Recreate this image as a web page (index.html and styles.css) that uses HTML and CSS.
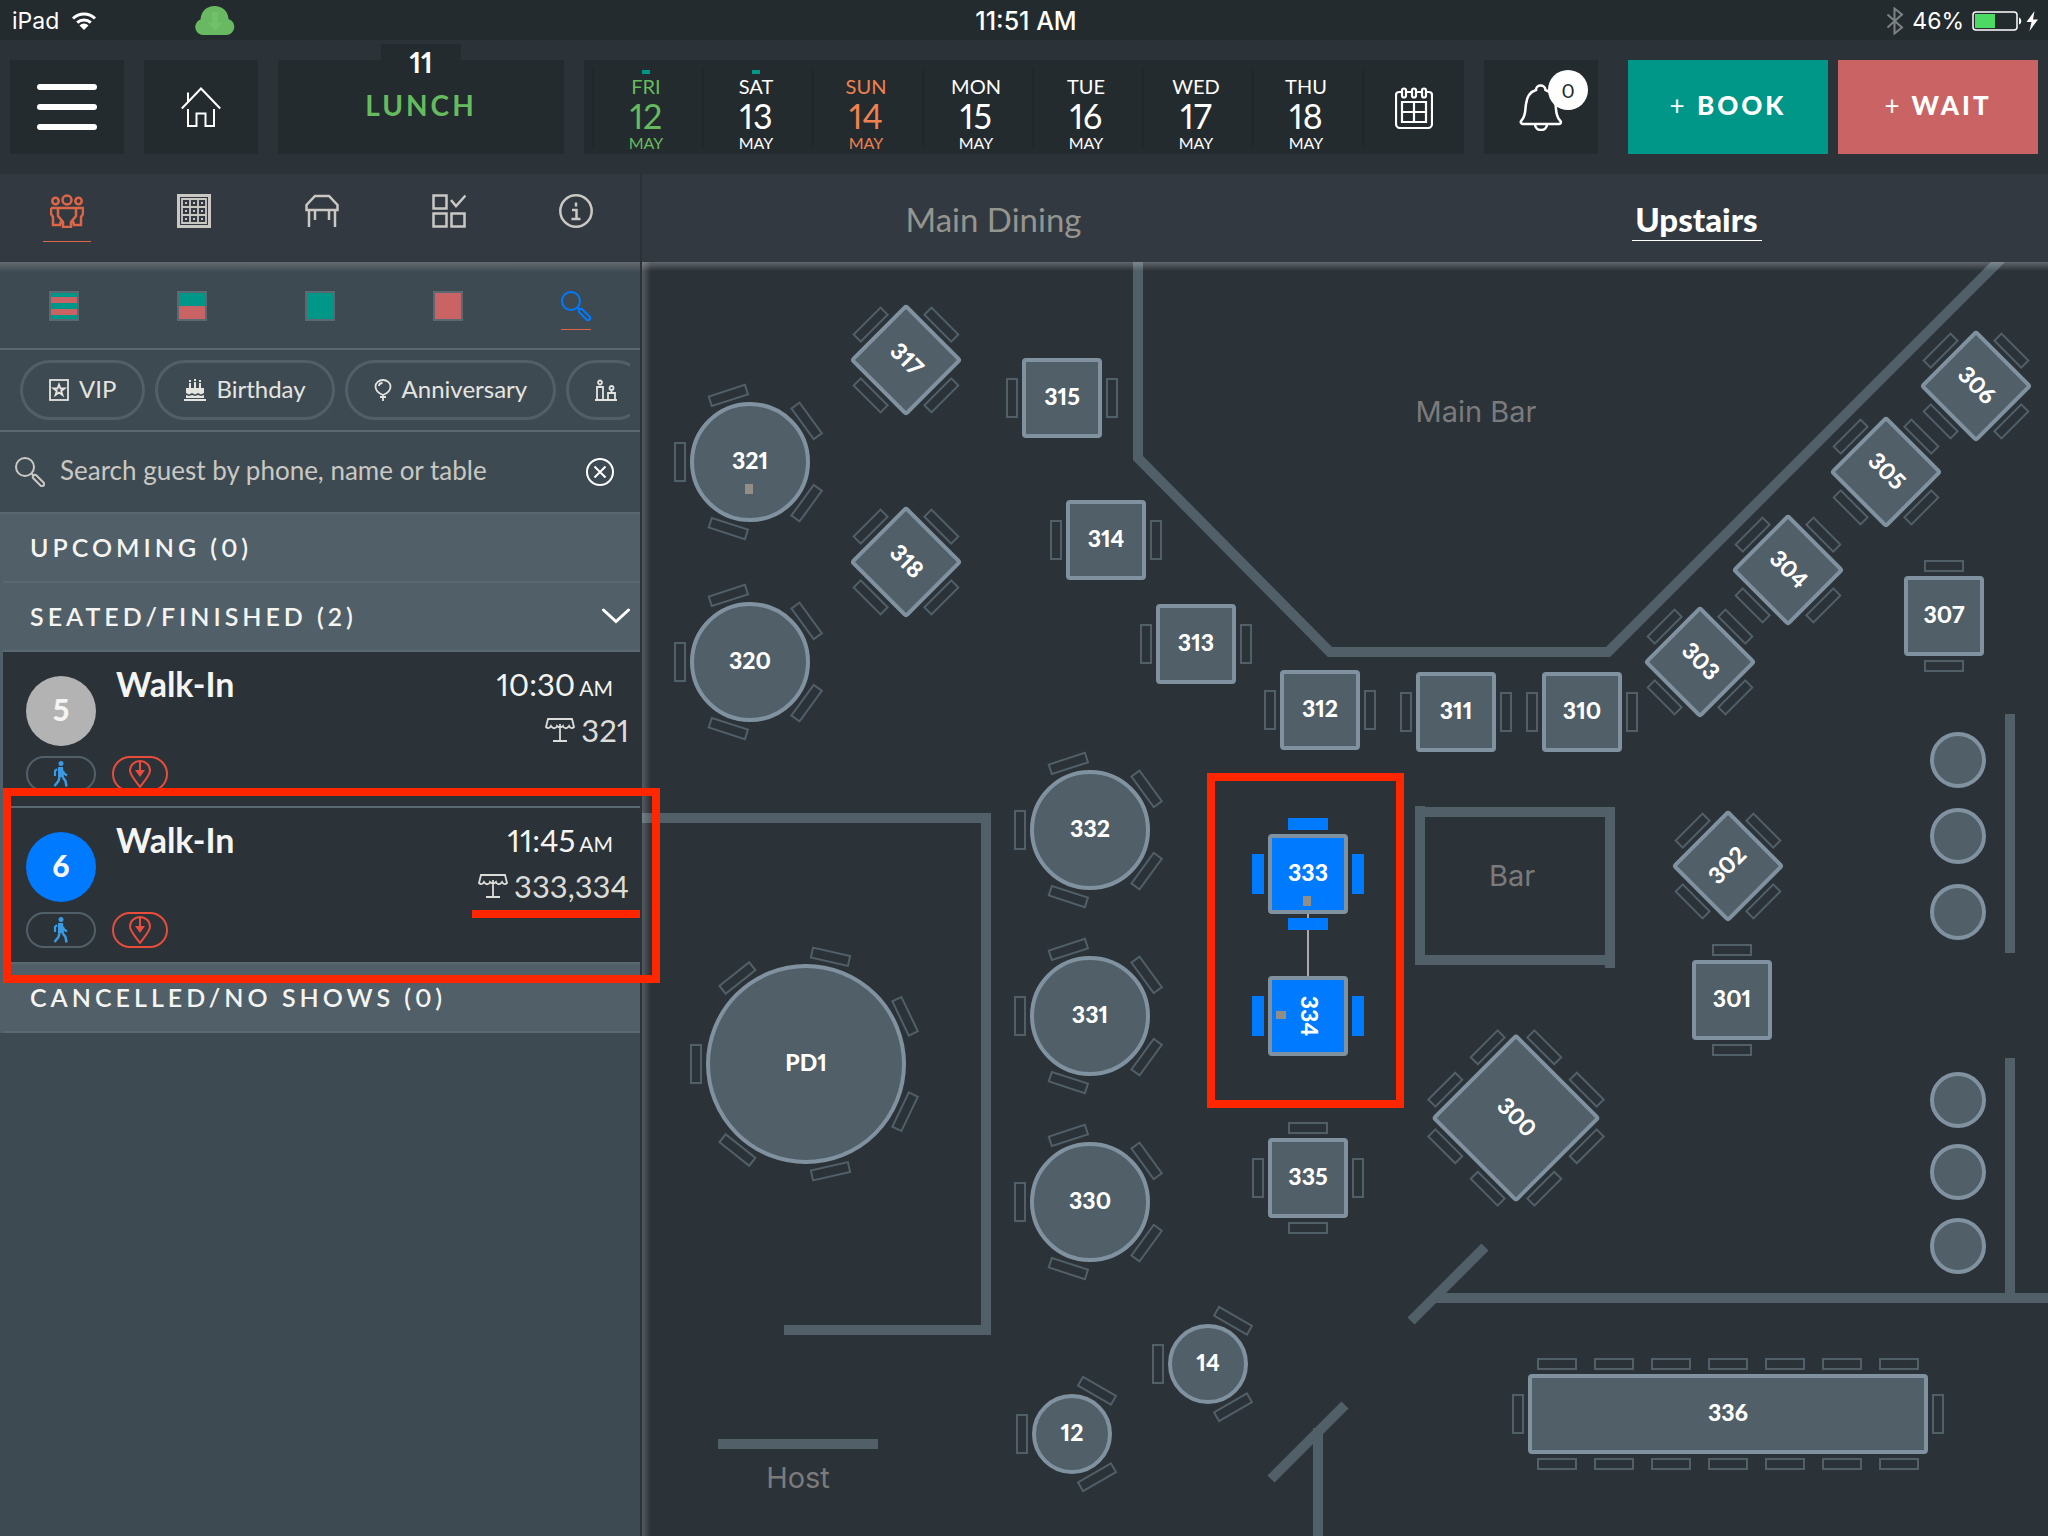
FILE: index.html
```
<!DOCTYPE html>
<html lang="en">
  <head>
    <meta charset="UTF-8" />
    <meta name="viewport" content="width=device-width, initial-scale=1.0" />
    <title>Floor Plan</title>
    <link rel="stylesheet" href="styles.css">
  </head>
  <body>
    <div class="status-bar">
      <div class="status-left">
        <span>iPad</span>
        <svg class="wifi" width="26" height="20" viewBox="0 0 26 20">
          <path d="M2 7.500a16 16 0 0 1 22 0M6.200 11.700a10 10 0 0 1 13.600 0" fill="none" stroke="#fff" stroke-width="3"/>
          <path d="M13 19l-4.500-4.600a6.500 6.500 0 0 1 9 0z" fill="#fff"/>
        </svg>
        <svg class="cloud" width="40" height="30" viewBox="0 0 40 30">
          <path d="M8 29a8 8 0 0 1-2.500-15.500C6 5 12 0 19.500 0S33 5 33.500 13A8.200 8.200 0 0 1 32 29z" fill="#69b963"/>
          <path d="M17 6h6v11h4l-7 8-7-8h4z" fill="#73c06b"/>
        </svg>
      </div>
      <span class="clock">11:51 AM</span>
      <div class="status-right">
        <svg width="18" height="28" viewBox="0 0 18 28">
          <path d="M1.500 7.500L16 20.500l-7.500 6V1.500l7.500 6L1.500 20.500" fill="none" stroke="#7d8284" stroke-width="2"/>
        </svg>
        <span>46%</span>
        <svg width="68" height="22" viewBox="0 0 68 22">
          <rect x="1" y="2" width="44" height="18" rx="3" fill="none" stroke="#fff" stroke-width="1.500"/>
          <rect x="3" y="4" width="20" height="14" fill="#4cd964"/>
          <path d="M47 7.500c3 1 3 6 0 7z" fill="#fff"/>
          <path d="M62.500 1L54.500 12h5l-2 9 8.500-11.500h-5z" fill="#fff"/>
        </svg>
      </div>
    </div>

    <header class="toolbar">
      <button class="tile" aria-label="Menu">
        <svg width="60" height="46" viewBox="0 0 60 46" fill="#fff">
          <rect width="60" height="6" rx="3"/>
          <rect y="20" width="60" height="6" rx="3"/>
          <rect y="40" width="60" height="6" rx="3"/>
        </svg>
      </button>
      <button class="tile" aria-label="Home">
        <svg width="40" height="40" viewBox="0 0 40 40" fill="none" stroke="#fff" stroke-width="2">
          <path d="M0.800 21.500L20 1.500l19.200 20M7 14.500V5.500M7 22v17h8.500V26.500h9V39H33V22"/>
        </svg>
      </button>
      <button class="tile shift">
        <span class="shift-count">11</span>
        LUNCH
      </button>
      <nav class="dates">
        <a href="#" class="date today has-mark"><span>FRI</span><b>12</b><small>MAY</small></a>
        <a href="#" class="date has-mark"><span>SAT</span><b>13</b><small>MAY</small></a>
        <a href="#" class="date holiday"><span>SUN</span><b>14</b><small>MAY</small></a>
        <a href="#" class="date"><span>MON</span><b>15</b><small>MAY</small></a>
        <a href="#" class="date"><span>TUE</span><b>16</b><small>MAY</small></a>
        <a href="#" class="date"><span>WED</span><b>17</b><small>MAY</small></a>
        <a href="#" class="date"><span>THU</span><b>18</b><small>MAY</small></a>
        <button class="calendar" aria-label="Calendar">
          <svg width="38" height="42" viewBox="0 0 38 42" fill="none" stroke="#fff" stroke-width="2.200">
            <path d="M6 5H4a3 3 0 0 0-3 3v29a4 4 0 0 0 4 4h28a4 4 0 0 0 4-4V8a3 3 0 0 0-3-3h-2M12 5h4M22 5h4"/>
            <rect x="7" y="1.500" width="4" height="9" rx="2"/>
            <rect x="17" y="1.500" width="4" height="9" rx="2"/>
            <rect x="27" y="1.500" width="4" height="9" rx="2"/>
            <path d="M7 15h24v20H7zM7 25h24M19 15v20"/>
          </svg>
        </button>
      </nav>
      <button class="tile bell" aria-label="Notifications">
        <svg width="44" height="48" viewBox="0 0 44 48" fill="none" stroke="#fff" stroke-width="2.500">
          <path d="M4 41c-2 0-3-2-1.500-3.500C7 33 6 27 7 21 8 12 12 8.500 17 7c0-6 9-6 9.500 0 5 1.500 9 6 10 14 .800 6 0 12 4.500 16.500C42.500 39 42 41 40 41z"/>
          <path d="M16 41c0 8 12 8 12 0"/>
        </svg>
        <span class="badge">0</span>
      </button>
      <div class="actions">
        <button class="book"><span>+</span> BOOK</button>
        <button class="wait"><span>+</span> WAIT</button>
      </div>
    </header>

    <main>
      <section class="sidebar">
        <nav class="views">
          <button class="active" aria-label="Guests">
            <svg width="34" height="34" viewBox="0 0 34 34" fill="none" stroke="#dd6647" stroke-width="2.500">
              <circle cx="17" cy="6" r="4.500"/><circle cx="5.500" cy="7" r="3.200"/><circle cx="28.500" cy="7" r="3.200"/>
              <path d="M1 14h32v6l-2 3v8h-7l-1-4M11 27l-1 4H3v-8l-2-3v-6M8 14v8l5 6v5h8v-5l5-6v-8"/>
            </svg>
          </button>
          <button aria-label="Grid">
            <svg width="34" height="34" viewBox="0 0 34 34" fill="none" stroke="#c9c8c3" stroke-width="2">
              <rect x="1.500" y="1.500" width="31" height="31" stroke-width="3"/>
              <path d="M5 5h24v24H5zM13 5v24M21 5v24M5 13h24M5 21h24" stroke-width="1.800"/>
              <path d="M8 9h2M16 9h2M24 9h2M8 17h2M16 17h2M24 17h2M8 25h2M16 25h2M24 25h2"/>
            </svg>
          </button>
          <button aria-label="Tables">
            <svg width="34" height="34" viewBox="0 0 34 34" fill="none" stroke="#c9c8c3" stroke-width="2.500">
              <path d="M10 2h14l8.500 9v5h-31v-5zM4 16v17M30 16v17M10 16v10M24 16v10"/>
            </svg>
          </button>
          <button aria-label="Servers">
            <svg width="34" height="34" viewBox="0 0 34 34" fill="none" stroke="#c9c8c3" stroke-width="2.500">
              <path d="M1.500 1.500h13v13h-13zM1.500 19.500h13v13h-13zM19.500 19.500h13v13h-13zM19 6l5 6 9.500-10.500"/>
            </svg>
          </button>
          <button aria-label="Info">
            <svg width="34" height="34" viewBox="0 0 34 34" fill="none" stroke="#c9c8c3" stroke-width="2.500">
              <circle cx="17" cy="17" r="15.700"/>
              <path d="M17 8.500v4M13 16h4.500v8.500M12.500 25h9" stroke-width="2.500"/>
            </svg>
          </button>
        </nav>

        <nav class="filters">
          <button aria-label="All"><span class="swatch stripes"></span></button>
          <button aria-label="Booked and waiting"><span class="swatch halves"></span></button>
          <button aria-label="Booked"><span class="swatch booked"></span></button>
          <button aria-label="Waiting"><span class="swatch waiting"></span></button>
          <button class="active" aria-label="Search">
            <svg width="30" height="30" viewBox="0 0 30 30" fill="none" stroke="#007aff" stroke-width="2">
              <circle cx="10" cy="10" r="9"/>
              <path d="M16.500 16.500l2.500 2.500M18.500 18.500c1-1 2-1 3 0l7 7c2 2-1 5-3 3l-7-7c-1-1-1-2 0-3z"/>
            </svg>
          </button>
        </nav>

        <div class="chips">
          <button class="chip">
            <svg width="20" height="22" viewBox="0 0 20 22" fill="none" stroke="#e4e4e0" stroke-width="1.800">
              <rect x="1" y="1" width="18" height="20"/>
              <path d="M10 5.500l1.500 4h4l-3.300 2.500 1.300 4-3.500-2.400L6.500 16l1.300-4-3.300-2.500h4z"/>
            </svg>
            <span>VIP</span>
          </button>
          <button class="chip">
            <svg width="22" height="22" viewBox="0 0 22 22" fill="#e4e4e0">
              <path d="M2 9h18v5l-3 1.500-3-1.500-3 1.500-3-1.500-3 1.500L2 14zM2 16l3 1 3-1 3 1 3-1 3 1 3-1v3H2zM0 20h22v2H0zM5 4h2v5H5zM10 3h2v6h-2zM15 4h2v5h-2zM5 1h2v2H5zM10 0h2v2h-2zM15 1h2v2h-2z"/>
            </svg>
            <span>Birthday</span>
          </button>
          <button class="chip">
            <svg width="18" height="22" viewBox="0 0 18 22" fill="none" stroke="#e4e4e0" stroke-width="1.800">
              <path d="M9 16C4 14 1.500 11 1.500 7.500 1.500 4 5 1 9 1s7.500 3 7.500 6.500C16.500 11 14 14 9 16zM9 16v6M6 18h6M5 7c0-2 1.500-3 3.500-3"/>
            </svg>
            <span>Anniversary</span>
          </button>
          <button class="chip" aria-label="Date night">
            <svg width="22" height="22" viewBox="0 0 22 22" fill="none" stroke="#e4e4e0" stroke-width="1.800">
              <path d="M0 21h22M2 21V8h6v13M13 21v-7h7v7M16.500 14v-2"/>
              <circle cx="5" cy="3.500" r="2"/><circle cx="16.500" cy="9" r="2"/>
            </svg>
          </button>
        </div>

        <form class="search">
          <svg width="30" height="30" viewBox="0 0 30 30" fill="none" stroke="#c9c8c3" stroke-width="2">
            <circle cx="10" cy="10" r="9"/>
            <path d="M16.500 16.500l2.500 2.500M18.500 18.500c1-1 2-1 3 0l7 7c2 2-1 5-3 3l-7-7c-1-1-1-2 0-3z"/>
          </svg>
          <input type="text" aria-label="Search guests" placeholder="Search guest by phone, name or table">
          <button type="button" aria-label="Clear">
            <svg width="28" height="28" viewBox="0 0 28 28" fill="none" stroke="#fff" stroke-width="2">
              <circle cx="14" cy="14" r="13"/><path d="M8.500 8.500l11 11M19.500 8.500l-11 11"/>
            </svg>
          </button>
        </form>

        <div class="guests">
          <h2>UPCOMING (0)</h2>
          <h2>
            SEATED/FINISHED (2)
            <svg width="28" height="16" viewBox="0 0 28 16"><path d="M1.500 2L14 13.500 26.500 2" fill="none" stroke="#fff" stroke-width="3" stroke-linecap="round"/></svg>
          </h2>
          <article class="guest">
            <span class="party">5</span>
            <h3>Walk-In</h3>
            <div class="seating">
              <p class="time">10:30<small>AM</small></p>
              <p><svg width="30" height="24" viewBox="0 0 30 24"><use href="#seat-icon"/></svg>321</p>
            </div>
            <div class="tags">
              <span class="tag walk"><svg width="18" height="26" viewBox="0 0 18 26"><use href="#walk-icon"/></svg></span>
              <span class="tag pin"><svg width="22" height="28" viewBox="0 0 22 28"><use href="#pin-icon"/></svg></span>
            </div>
          </article>
          <article class="guest selected">
            <span class="party">6</span>
            <h3>Walk-In</h3>
            <div class="seating">
              <p class="time">11:45<small>AM</small></p>
              <p><svg width="30" height="24" viewBox="0 0 30 24"><use href="#seat-icon"/></svg>333,334</p>
            </div>
            <div class="tags">
              <span class="tag walk"><svg width="18" height="26" viewBox="0 0 18 26"><use href="#walk-icon"/></svg></span>
              <span class="tag pin"><svg width="22" height="28" viewBox="0 0 22 28"><use href="#pin-icon"/></svg></span>
            </div>
            <div class="callout"></div>
            <div class="callout-line"></div>
          </article>
          <h2>CANCELLED/NO SHOWS (0)</h2>
        </div>
      </section>

      <section class="room">
        <nav class="rooms">
          <a href="#">Main Dining</a>
          <a href="#" class="active">Upstairs</a>
        </nav>
        <div class="floor">
          <svg viewBox="642 262 1406 1274">
            <g class="walls">
              <path d="M1138 250V458L1330 652H1608L2006 254"/>
              <path d="M642 818H986V1330H784M718 1444H878"/>
              <path d="M1415 812H1610V968M1420 806V960H1615"/>
              <path d="M2010 714V953M2010 1058V1298M1435 1298H2060"/>
              <path d="M1411 1321L1485 1247M1271 1479L1345 1405M1318 1428V1546"/>
            </g>
            <g class="areas">
              <text x="1476" y="422">Main Bar</text>
              <text x="1512" y="886">Bar</text>
              <text x="798" y="1488">Host</text>
            </g>
            <path class="link" d="M1308 914V976"/>
            <g id="tables"></g>
            <rect class="callout-box" x="1211" y="777" width="189" height="327"/>
          </svg>
        </div>
      </section>
    </main>

    <svg class="sprite" width="0" height="0">
      <symbol id="seat-icon" viewBox="0 0 30 24">
        <path d="M3 1h24l2 8c-2 2-4 1-5-1-2 3-5 3-6 0-2 2-4 2-6 0-1 3-4 3-6 0-1 2-3 3-5 1zM15 6v17M8 23h14" fill="none" stroke="#dcdcd8" stroke-width="1.800"/>
      </symbol>
      <symbol id="walk-icon" viewBox="0 0 18 26">
        <circle cx="9" cy="2.500" r="2.500" fill="#3a9be4"/>
        <path d="M8 7l1.500 1L9 16M5 8L3 10v5M11 10l1 2.500 3 2" fill="none" stroke="#3a9be4" stroke-width="2.200"/>
        <path d="M6 6h5l1 10H6z" fill="#3a9be4"/>
        <path d="M7.500 16L6.500 20 2.500 25M10.500 16l3 4 1 5.500" fill="none" stroke="#3a9be4" stroke-width="2.500"/>
      </symbol>
      <symbol id="pin-icon" viewBox="0 0 22 28">
        <path d="M11 27C6 20 1 15 1 10.500a10 9.500 0 0 1 20 0C21 15 16 20 11 27z" fill="none" stroke="#e84c3d" stroke-width="2"/>
        <path d="M10 2h2v8h4l-5 7-5-7h4z" fill="#e84c3d"/>
      </symbol>
    </svg>

    <script>
      // x, y are the centre of the table; sides lists the edges that have a chair
      const tables = [
        { name: "321", shape: "round", r: 60, chairs: 5, x: 750, y: 462, mark: true },
        { name: "320", shape: "round", r: 60, chairs: 5, x: 750, y: 662 },
        { name: "332", shape: "round", r: 60, chairs: 5, x: 1090, y: 830 },
        { name: "331", shape: "round", r: 60, chairs: 5, x: 1090, y: 1016 },
        { name: "330", shape: "round", r: 60, chairs: 5, x: 1090, y: 1202 },
        { name: "PD1", shape: "round", r: 100, chairs: 7, x: 806, y: 1064 },
        { name: "14", shape: "round", r: 40, chairs: 3, x: 1208, y: 1364 },
        { name: "12", shape: "round", r: 40, chairs: 3, x: 1072, y: 1434 },
        { name: "317", x: 906, y: 360, angle: 45, sides: "lrtb" },
        { name: "318", x: 906, y: 562, angle: 45, sides: "lrtb" },
        { name: "315", x: 1062, y: 398, sides: "lr" },
        { name: "314", x: 1106, y: 540, sides: "lr" },
        { name: "313", x: 1196, y: 644, sides: "lr" },
        { name: "312", x: 1320, y: 710, sides: "lr" },
        { name: "311", x: 1456, y: 712, sides: "lr" },
        { name: "310", x: 1582, y: 712, sides: "lr" },
        { name: "303", x: 1700, y: 662, angle: 45, sides: "lrtb" },
        { name: "304", x: 1788, y: 570, angle: 45, sides: "lrtb" },
        { name: "305", x: 1886, y: 472, angle: 45, sides: "lrtb" },
        { name: "306", x: 1976, y: 386, angle: 45, sides: "lrtb" },
        { name: "307", x: 1944, y: 616, sides: "tb" },
        { name: "302", x: 1728, y: 866, angle: -45, sides: "lrtb" },
        { name: "301", x: 1732, y: 1000, sides: "tb" },
        { name: "333", x: 1308, y: 874, sides: "lrtb", seated: true, mark: true },
        { name: "334", x: 1308, y: 1016, angle: 90, sides: "tb", seated: true, mark: true },
        { name: "335", x: 1308, y: 1178, sides: "lrtb" },
        { name: "300", x: 1516, y: 1118, w: 120, h: 120, angle: 45, sides: "lrtb", across: 2, down: 2 },
        { name: "336", x: 1728, y: 1414, w: 400, sides: "lrtb", across: 7 },
      ];

      // bar stools
      [760, 836, 912, 1100, 1172, 1246].forEach((y) => {
        tables.push({ name: "", shape: "round", r: 28, chairs: 0, x: 1958, y });
      });

      function chair(x, y, angle) {
        return `<rect class="chair" x="-19" y="-5" width="38" height="10" transform="translate(${x} ${y}) rotate(${angle})"/>`;
      }

      function roundTable(t) {
        let out = "";
        for (let i = 0; i < t.chairs; i++) {
          out += `<g transform="rotate(${(360 / t.chairs) * i})">${chair(-t.r - 10, 0, 90)}</g>`;
        }
        return out + `<circle class="top" r="${t.r - 2}"/>`;
      }

      function squareTable(t) {
        const w = t.w || 80;
        const h = t.h || 80;
        const across = t.across || 1;
        const down = t.down || 1;
        let out = "";
        for (let i = 0; i < across; i++) {
          const step = across === 2 ? 60 : 57;
          const x = (i - (across - 1) / 2) * step;
          if (t.sides.includes("t")) out += chair(x, -h / 2 - 10, 0);
          if (t.sides.includes("b")) out += chair(x, h / 2 + 10, 0);
        }
        for (let i = 0; i < down; i++) {
          const y = (i - (down - 1) / 2) * 60;
          if (t.sides.includes("l")) out += chair(-w / 2 - 10, y, 90);
          if (t.sides.includes("r")) out += chair(w / 2 + 10, y, 90);
        }
        return out + `<rect class="top" x="${-w / 2 + 2}" y="${-h / 2 + 2}" width="${w - 4}" height="${h - 4}" rx="2"/>`;
      }

      document.getElementById("tables").innerHTML = tables
        .map((t) => {
          const body = t.shape === "round" ? roundTable(t) : squareTable(t);
          const mark = t.mark ? `<rect class="mark" x="-5" y="22" width="8" height="10"/>` : "";
          return `<g class="table${t.seated ? " seated" : ""}" transform="translate(${t.x} ${t.y}) rotate(${t.angle || 0})">
            ${body}${mark}<text y="7">${t.name}</text></g>`;
        })
        .join("");
    </script>
  </body>
</html>
```
FILE: styles.css
```
* {
  box-sizing: border-box;
  margin: 0;
  padding: 0;
}

body {
  font-family: Lato, "Open Sans", sans-serif;
  font-variant-numeric: proportional-nums;
  color: #fff;
  background-color: #2b3238;
  min-height: 100vh;
  display: flex;
  flex-direction: column;
}

button {
  font: inherit;
  color: inherit;
  background: none;
  border: none;
  cursor: pointer;
}

a {
  color: inherit;
  text-decoration: none;
}

svg {
  display: block;
  flex-shrink: 0;
}

.sprite {
  position: absolute;
}

/* status bar */
.status-bar {
  height: 40px;
  padding: 2px 8px 0 12px;
  background-color: #242b2e;
  font-family: Inter, Roboto, sans-serif;
  font-size: 23px;
  display: grid;
  grid-template-columns: 1fr auto 1fr;
  align-items: center;
}

.status-left,
.status-right {
  display: flex;
  align-items: center;
}

.status-right {
  justify-content: flex-end;
  gap: 8px;
}

.wifi {
  margin-left: 12px;
}

.cloud {
  margin-left: 98px;
}

.clock {
  font-size: 25px;
  font-weight: 500;
}

/* toolbar */
.toolbar {
  height: 134px;
  padding: 20px 10px;
  display: flex;
  align-items: flex-start;
  gap: 20px;
}

.tile,
.dates {
  height: 94px;
  background-color: #242b2e;
}

.tile {
  flex: 0 0 114px;
  display: flex;
  align-items: center;
  justify-content: center;
  position: relative;
}

.shift {
  flex-basis: 286px;
  padding-bottom: 4px;
  color: #66bb5f;
  font-size: 28px;
  font-weight: 700;
  letter-spacing: 3px;
}

.shift-count {
  position: absolute;
  top: -16px;
  left: 50%;
  width: 80px;
  margin-left: -40px;
  background-color: #242b2e;
  color: #fff;
  line-height: 36px;
  letter-spacing: 0;
}

.dates {
  flex: 1;
  display: flex;
  padding: 8px 0 6px 8px;
}

.date {
  flex: 1;
  position: relative;
  padding-right: 4px;
  border-left: 2px solid #20262a;
  display: flex;
  flex-direction: column;
  align-items: center;
  text-align: center;
}

.date span {
  margin-top: 6px;
  font-size: 20px;
  line-height: 24px;
}

.date b {
  font-size: 34px;
  line-height: 36px;
  font-weight: 400;
}

.date small {
  font-size: 16px;
  line-height: 18px;
}

.has-mark::before {
  content: "";
  position: absolute;
  top: 2px;
  width: 8px;
  height: 4px;
  background-color: #009688;
}

.today {
  color: #66bb5f;
}

.holiday {
  color: #f08250;
}

.calendar {
  flex: 0 0 102px;
  border-left: 2px solid #20262a;
  display: flex;
  align-items: center;
  justify-content: center;
}

.badge {
  position: absolute;
  top: 10px;
  right: 10px;
  width: 40px;
  border-radius: 50%;
  background-color: #fff;
  color: #242b2e;
  font-size: 20px;
  line-height: 40px;
}

.actions {
  display: flex;
  gap: 10px;
  margin-left: 10px;
}

.actions button {
  width: 200px;
  height: 94px;
  padding-bottom: 4px;
  font-size: 26px;
  font-weight: 900;
  letter-spacing: 3px;
}

.actions span {
  font-weight: 400;
}

.book {
  background-color: #009688;
}

.wait {
  background-color: #c96364;
}

/* main area */
main {
  flex: 1;
  display: flex;
}

.sidebar {
  flex: 0 0 31.25%;
  min-width: 0;
  position: relative;
  z-index: 1;
  background-color: #3e4a52;
}

.room {
  flex: 1;
  min-width: 0;
  border-left: 2px solid #2b3238;
}

.views,
.filters {
  display: flex;
}

.views {
  height: 88px;
  padding-left: 3px;
  background-color: #323941;
}

.views button,
.filters button {
  flex: 1;
  display: flex;
  flex-direction: column;
  align-items: center;
}

.views button {
  padding-top: 20px;
}

.views .active::after {
  content: "";
  width: 48px;
  height: 1px;
  margin-top: 13px;
  background-color: #dd6647;
}

.filters {
  height: 88px;
  border-bottom: 2px solid #596871;
  background-image: linear-gradient(#656b70, #3e4a52 10px);
}

.filters button {
  padding-top: 29px;
}

.filters .active::after {
  content: "";
  width: 30px;
  height: 1px;
  margin-top: 8px;
  background-color: #dd6647;
}

.swatch {
  width: 30px;
  height: 30px;
  border: 2px solid #596871;
}

.stripes {
  background: linear-gradient(#009688 4px, #c96364 4px 10px, #009688 10px 16px, #c96364 16px 22px, #009688 22px);
}

.halves {
  background: linear-gradient(#009688 50%, #c96364 50%);
}

.booked {
  background-color: #009688;
}

.waiting {
  background-color: #c96364;
}

.chips {
  height: 80px;
  margin: 0 10px 0 20px;
  display: flex;
  align-items: center;
  gap: 10px;
  overflow: hidden;
}

.chip {
  flex-shrink: 0;
  height: 60px;
  padding: 0 26px;
  border: 3px solid #515f68;
  border-radius: 30px;
  color: #e4e4e0;
  font-size: 24px;
  display: flex;
  align-items: center;
  gap: 10px;
}

.chip span {
  padding-bottom: 4px;
}

.search {
  height: 84px;
  padding: 0 26px 0 15px;
  border-top: 2px solid #596871;
  border-bottom: 2px solid #596871;
  display: flex;
  align-items: center;
}

.search input {
  flex: 1;
  min-width: 0;
  height: 60px;
  margin-left: 15px;
  padding-bottom: 4px;
  background: none;
  border: none;
  outline: none;
  color: #fff;
  font: inherit;
  font-size: 26px;
}

.search input::placeholder {
  color: #c9c8c3;
  opacity: 1;
}

/* guest list */
.guests {
  border-left: 3px solid #515f68;
}

.guests h2 {
  height: 69px;
  padding: 0 10px 2px 27px;
  background-color: #515f68;
  border-bottom: 2px solid #596871;
  color: #f4f4f2;
  font-size: 25px;
  font-weight: 600;
  letter-spacing: 4px;
  display: flex;
  align-items: center;
  justify-content: space-between;
}

.guest {
  position: relative;
  height: 156px;
  padding: 0 11px 0 23px;
  background-color: #2b3238;
  border-bottom: 2px solid #596871;
  color: #f4f4f2;
  display: grid;
  grid-template-columns: 70px 1fr auto;
  grid-template-rows: 96px 36px;
  gap: 8px 20px;
}

.party {
  height: 70px;
  margin-top: 24px;
  border-radius: 50%;
  background-color: #b3b3b3;
  font-size: 30px;
  font-weight: 900;
  line-height: 66px;
  text-align: center;
}

.selected .party {
  background-color: #007aff;
}

.guest h3 {
  margin-top: 11px;
  font-size: 34px;
  line-height: 42px;
}

.seating {
  margin-top: 11px;
}

.seating p {
  color: #dcdcd8;
  font-size: 31px;
  line-height: 42px;
  display: flex;
  align-items: center;
  justify-content: flex-end;
  gap: 6px;
}

.seating .time {
  padding-right: 16px;
  color: #f4f4f2;
  align-items: baseline;
  gap: 4px;
}

.seating small {
  font-size: 21px;
}

.tags {
  grid-column: 1 / -1;
  display: flex;
  gap: 16px;
}

.tag {
  width: 70px;
  height: 36px;
  border: 2px solid #515f68;
  border-radius: 18px;
  display: flex;
  align-items: center;
  justify-content: center;
}

.pin {
  width: 56px;
  border-color: #e84c3d;
}

.callout {
  position: absolute;
  top: -20px;
  left: 0;
  right: -20px;
  height: 195px;
  border: 8px solid #ff2600;
  z-index: 1;
}

.callout-line {
  position: absolute;
  top: 102px;
  right: 0;
  width: 168px;
  height: 8px;
  background-color: #ff2600;
}

/* floor plan */
.rooms {
  height: 88px;
  background-color: #323941;
  display: flex;
  font-size: 33px;
}

.rooms a {
  flex: 1;
  padding-top: 24px;
  line-height: 42px;
  color: #95958f;
  display: flex;
  flex-direction: column;
  align-items: center;
}

.rooms .active {
  color: #fff;
  font-weight: 900;
}

.rooms .active::after {
  content: "";
  width: 130px;
  height: 1px;
  background-color: #fff;
}

.floor {
  position: relative;
}

.floor::before {
  content: "";
  position: absolute;
  inset: 0;
  background:
    linear-gradient(rgba(255, 255, 255, 0.25), transparent) top / 100% 9px no-repeat,
    linear-gradient(to right, rgba(255, 255, 255, 0.2), transparent) left / 9px 100% no-repeat;
}

.floor svg {
  width: 100%;
  height: auto;
}

.walls path {
  fill: none;
  stroke: #515f68;
  stroke-width: 10px;
}

.areas text {
  font-family: Inter, Roboto, sans-serif;
  font-size: 29px;
  fill: #7b7b7b;
  text-anchor: middle;
}

.link {
  stroke: #aaa;
  stroke-width: 2px;
}

.top {
  fill: #515f68;
  stroke: #8092a0;
  stroke-width: 4px;
}

.chair {
  fill: none;
  stroke: #515f68;
  stroke-width: 2px;
}

.seated .top {
  fill: #007aff;
}

.seated .chair {
  fill: #007aff;
  stroke: #007aff;
}

.mark {
  fill: #918d87;
}

.table text {
  font-size: 23px;
  font-weight: 900;
  fill: #fff;
  text-anchor: middle;
}

.callout-box {
  fill: none;
  stroke: #ff2600;
  stroke-width: 8px;
}
```
